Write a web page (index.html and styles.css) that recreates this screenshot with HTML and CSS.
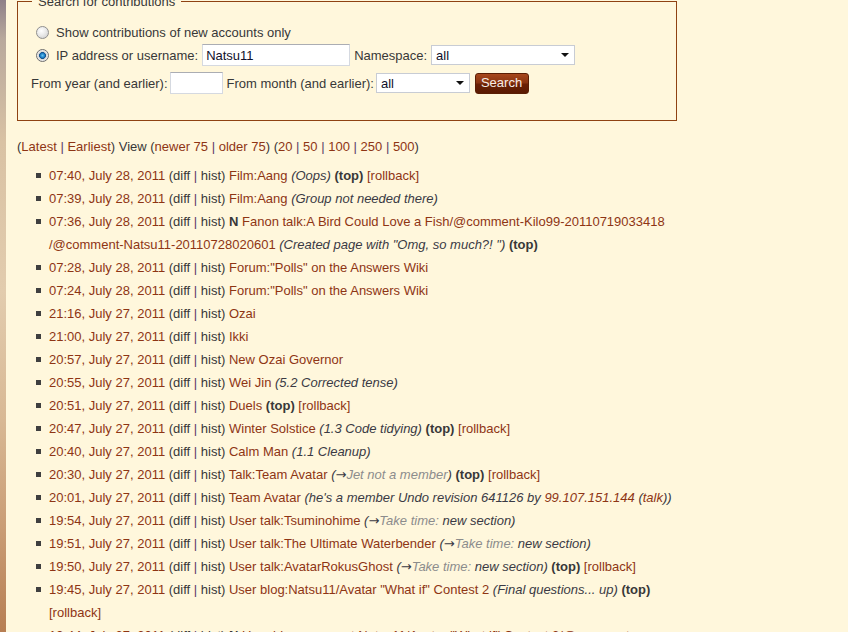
FILE: index.html
```html
<!DOCTYPE html>
<html>
<head>
<meta charset="utf-8">
<link rel="stylesheet" href="styles.css">
</head>
<body>
<div class="page">
  <div class="edge"></div>
  <div class="content">
    <div class="column">
      <fieldset class="search">
        <legend>Search for contributions</legend>
        <div class="row r1">
          <input type="radio" name="t" class="radio"><span>Show contributions of new accounts only</span>
        </div>
        <div class="row r2">
          <input type="radio" name="t" class="radio" checked><span>IP address or username:</span>
          <input type="text" class="txt user" value="Natsu11">
          <span>Namespace:</span>
          <select class="sel ns"><option>all</option></select>
        </div>
        <div class="row r3">
          <span>From year (and earlier):</span>
          <input type="text" class="txt year">
          <span>From month (and earlier):</span>
          <select class="sel month"><option>all</option></select>
          <button class="btn">Search</button>
        </div>
      </fieldset>

      <div class="nav">(<a>Latest</a> <span class="p">|</span> <a>Earliest</a>) View (<a>newer 75</a> <span class="p">|</span> <a>older 75</a>) (<a>20</a> <span class="p">|</span> <a>50</a> <span class="p">|</span> <a>100</a> <span class="p">|</span> <a>250</a> <span class="p">|</span> <a>500</a>)</div>

      <ul class="contribs">
        <li><a>07:40, July 28, 2011</a> (diff <span class="p">|</span> hist) <a>Film:Aang</a> <i>(Oops)</i> <b>(top)</b> <a>[rollback]</a></li>
        <li><a>07:39, July 28, 2011</a> (diff <span class="p">|</span> hist) <a>Film:Aang</a> <i>(Group not needed there)</i></li>
        <li><a>07:36, July 28, 2011</a> (diff <span class="p">|</span> hist) <b>N</b> <a>Fanon talk:A Bird Could Love a Fish/@comment-Kilo99-20110719033418<wbr>/@comment-Natsu11-20110728020601</a> <i>(Created page with "Omg, so much?! ")</i> <b>(top)</b></li>
        <li><a>07:28, July 28, 2011</a> (diff <span class="p">|</span> hist) <a>Forum:"Polls" on the Answers Wiki</a></li>
        <li><a>07:24, July 28, 2011</a> (diff <span class="p">|</span> hist) <a>Forum:"Polls" on the Answers Wiki</a></li>
        <li><a>21:16, July 27, 2011</a> (diff <span class="p">|</span> hist) <a>Ozai</a></li>
        <li><a>21:00, July 27, 2011</a> (diff <span class="p">|</span> hist) <a>Ikki</a></li>
        <li><a>20:57, July 27, 2011</a> (diff <span class="p">|</span> hist) <a>New Ozai Governor</a></li>
        <li><a>20:55, July 27, 2011</a> (diff <span class="p">|</span> hist) <a>Wei Jin</a> <i>(5.2 Corrected tense)</i></li>
        <li><a>20:51, July 27, 2011</a> (diff <span class="p">|</span> hist) <a>Duels</a> <b>(top)</b> <a>[rollback]</a></li>
        <li><a>20:47, July 27, 2011</a> (diff <span class="p">|</span> hist) <a>Winter Solstice</a> <i>(1.3 Code tidying)</i> <b>(top)</b> <a>[rollback]</a></li>
        <li><a>20:40, July 27, 2011</a> (diff <span class="p">|</span> hist) <a>Calm Man</a> <i>(1.1 Cleanup)</i></li>
        <li><a>20:30, July 27, 2011</a> (diff <span class="p">|</span> hist) <a>Talk:Team Avatar</a> <i>(<span class="arr">→</span><span class="auto">Jet not a member</span>)</i> <b>(top)</b> <a>[rollback]</a></li>
        <li><a>20:01, July 27, 2011</a> (diff <span class="p">|</span> hist) <a>Team Avatar</a> <i>(he's a member Undo revision 641126 by <a>99.107.151.144</a> (<a>talk</a>))</i></li>
        <li><a>19:54, July 27, 2011</a> (diff <span class="p">|</span> hist) <a>User talk:Tsuminohime</a> <i>(<span class="arr">→</span><span class="auto">Take time:</span> new section)</i></li>
        <li><a>19:51, July 27, 2011</a> (diff <span class="p">|</span> hist) <a>User talk:The Ultimate Waterbender</a> <i>(<span class="arr">→</span><span class="auto">Take time:</span> new section)</i></li>
        <li><a>19:50, July 27, 2011</a> (diff <span class="p">|</span> hist) <a>User talk:AvatarRokusGhost</a> <i>(<span class="arr">→</span><span class="auto">Take time:</span> new section)</i> <b>(top)</b> <a>[rollback]</a></li>
        <li><a>19:45, July 27, 2011</a> (diff <span class="p">|</span> hist) <a>User blog:Natsu11/Avatar "What if" Contest 2</a> <i>(Final questions... up)</i> <b>(top)</b> <a>[rollback]</a></li>
        <li><a>19:44, July 27, 2011</a> (diff <span class="p">|</span> hist) <b>N</b> <a>User blog comment:Natsu11/Avatar "What if" Contest 2/@comment-</a></li>
      </ul>
    </div>
  </div>
</div>
</body>
</html>
```
FILE: styles.css
```css
html, body {
  margin: 0;
  padding: 0;
  height: 100%;
  overflow: hidden;
}
body {
  font-family: "Liberation Sans", Arial, sans-serif;
  font-size: 13px;
  color: #383838;
  background: #fff7dc;
}
.page {
  display: flex;
  min-height: 100%;
}
.edge {
  width: 6px;
  flex: none;
  background: linear-gradient(180deg, #8e8088 0%, #b8a89c 6%, #d9c2a4 22%, #e2ccae 45%, #d8b894 65%, #c99c74 82%, #b47a4e 100%);
}
.content {
  flex: 1;
  background: #fff7dc;
  padding-left: 11px;
}
.column {
  width: 660px;
}
a {
  color: #8e3514;
  text-decoration: none;
}
.p {
  color: #5a3a68;
}
.search {
  margin: -6px 0 0 0;
  padding: 12px 12px 26px 13px;
  border: 1px solid #8f4212;
  min-inline-size: 0;
}
.search legend {
  padding: 0 6px;
  margin-left: 1px;
  line-height: 15px;
  color: #383838;
}
.row {
  display: flex;
  align-items: center;
  height: 22px;
  white-space: nowrap;
}
.r1 { margin-bottom: 1px; }
.r2 { margin-bottom: 6px; }
.radio {
  appearance: none;
  -webkit-appearance: none;
  width: 13px;
  height: 13px;
  margin: 0 7px 0 5px;
  border-radius: 50%;
  border: 1px solid #8f8f8f;
  background: radial-gradient(circle at 40% 35%, #ffffff 0%, #eaeaea 45%, #c9c9c9 100%);
  box-sizing: border-box;
}
.radio:checked {
  background: radial-gradient(circle at 50% 50%, #62c4f2 0%, #1c7cc4 28%, #0d4f8c 40%, #d6d6d6 48%, #f4f4f4 75%, #cfcfcf 100%);
  border-color: #6e6e6e;
}
.txt {
  font-family: "Liberation Sans", Arial, sans-serif;
  font-size: 13px;
  color: #10102a;
  box-sizing: border-box;
  height: 22px;
  border: 1px solid #d5d9e0;
  border-top-color: #abadb3;
  background: #fff;
  padding: 1px 3px;
  outline: none;
}
.user { width: 148px; margin: 0 4px 0 4px; }
.year { width: 53px; margin: 0 4px 0 2px; }
.sel {
  appearance: none;
  -webkit-appearance: none;
  font-family: "Liberation Sans", Arial, sans-serif;
  font-size: 13px;
  color: #10102a;
  box-sizing: border-box;
  height: 20px;
  border: 1px solid #c8ccd4;
  border-radius: 0;
  padding: 0 0 0 4px;
  margin: 0 5px 0 4px;
  background: #fff url("data:image/svg+xml,%3Csvg xmlns='http://www.w3.org/2000/svg' width='8' height='4'%3E%3Cpath d='M0 0H8L4 4Z' fill='%23111'/%3E%3C/svg%3E") no-repeat right 5px center;
}
.ns { width: 144px; }
.month { width: 94px; margin-right: 5px; margin-left: 2px; }
.btn {
  font-family: "Liberation Sans", Arial, sans-serif;
  font-size: 13px;
  color: #f6ece6;
  height: 21px;
  padding: 0 6px 0 5px;
  border: 1px solid #5a1e04;
  border-radius: 3px;
  background: linear-gradient(180deg, #a7471c 0%, #8a3410 45%, #6a2004 55%, #5a1a02 100%);
  line-height: 18px;
}
.nav {
  margin-top: 14px;
  line-height: 23px;
}
.contribs {
  list-style: none;
  margin: 6px 0 0 0;
  padding: 0 0 0 32px;
  line-height: 23px;
}
.contribs li::before {
  content: "";
  display: inline-block;
  width: 5px;
  height: 5px;
  background: #3f3f3f;
  margin-left: -13px;
  margin-right: 8px;
  vertical-align: 2px;
}
.contribs i {
  color: #3a3a44;
}
.contribs b {
  color: #383838;
}
.arr {
  font-family: "DejaVu Sans", sans-serif;
  font-style: normal;
  font-size: 13px;
  line-height: 0;
}
.auto {
  color: #8c8c8c;
}
```
